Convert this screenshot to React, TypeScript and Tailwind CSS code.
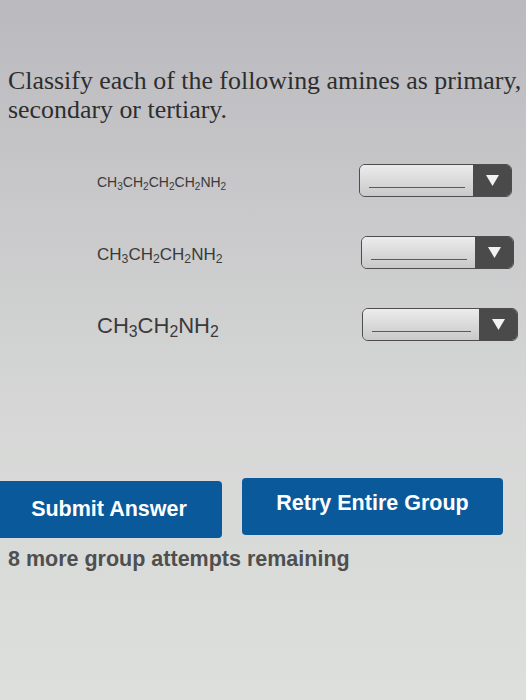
import React from "react";

function Formula({ parts, size }: { parts: [string, string][]; size: string }) {
  return (
    <div className={`text-[#3a3a3a] leading-none mt-[6px] ${size}`} style={{ fontFamily: '"Liberation Sans", Arial, sans-serif' }}>
      {parts.map(([a, s], i) => (
        <span key={i}>
          {a}
          {s && <span className="text-[0.72em] align-[-0.28em]">{s}</span>}
        </span>
      ))}
    </div>
  );
}

function Dropdown({ w }: { w: string }) {
  return (
    <div className={`flex h-[33px] ${w} rounded-[6px] border-[1.5px] border-[#4d4d4d] overflow-hidden`}>
      <div className="flex-1 bg-gradient-to-b from-[#ececec] to-[#c9c9c9] flex items-end pb-[8px] pl-[9px] pr-[8px]">
        <div className="h-[1.5px] w-full bg-[#5a5a5a]" />
      </div>
      <div className="w-[38px] bg-[#4a4a4a] flex items-center justify-center">
        <svg width="13" height="11" viewBox="0 0 13 11">
          <polygon points="0,0 13,0 6.5,11" fill="#f2f2f2" />
        </svg>
      </div>
    </div>
  );
}

export default function App() {
  return (
    <div
      className="w-[526px] h-[700px] overflow-hidden flex flex-col bg-[linear-gradient(180deg,#bab9be_0%,#c9c9cb_30%,#d6d7d6_60%,#dcdfdc_100%)]"
    >
      <div
        className="mt-[66px] pl-[8px] text-[25.9px] leading-[29px] text-[#2e2e2e] whitespace-nowrap"
        style={{ fontFamily: '"Liberation Serif", "Times New Roman", serif' }}
      >
        Classify each of the following amines as primary,
        <br />
        secondary or tertiary.
      </div>

      <div className="mt-[40px] flex flex-col">
        <div className="flex items-center justify-between h-[33px] pl-[97px] pr-[14px]">
          <Formula size="text-[14px]" parts={[["CH", "3"], ["CH", "2"], ["CH", "2"], ["CH", "2"], ["NH", "2"]]} />
          <Dropdown w="w-[153px]" />
        </div>
        <div className="mt-[39px] flex items-center justify-between h-[33px] pl-[97px] pr-[12px]">
          <Formula size="text-[17px]" parts={[["CH", "3"], ["CH", "2"], ["CH", "2"], ["NH", "2"]]} />
          <Dropdown w="w-[153px]" />
        </div>
        <div className="mt-[38px] flex items-center justify-between h-[35px] pl-[97px] pr-[8px]">
          <Formula size="text-[22px]" parts={[["CH", "3"], ["CH", "2"], ["NH", "2"]]} />
          <Dropdown w="w-[156px]" />
        </div>
      </div>

      <div
        className="mt-[136px] flex gap-[20px] font-bold text-white text-[21.5px]"
        style={{ fontFamily: '"Liberation Sans", Arial, sans-serif' }}
      >
        <button className="w-[222px] h-[57px] mt-[3px] bg-[#0a5a9b] rounded-r-[4px] flex items-center justify-center pr-[4px]">
          Submit Answer
        </button>
        <button className="w-[261px] h-[57px] bg-[#0a5a9b] rounded-[4px] flex items-center justify-center pb-[6px]">
          Retry Entire Group
        </button>
      </div>

      <div
        className="mt-[5px] pl-[8px] font-bold text-[21.5px] text-[#4f4f4f]"
        style={{ fontFamily: '"Liberation Sans", Arial, sans-serif' }}
      >
        8 more group attempts remaining
      </div>
    </div>
  );
}
